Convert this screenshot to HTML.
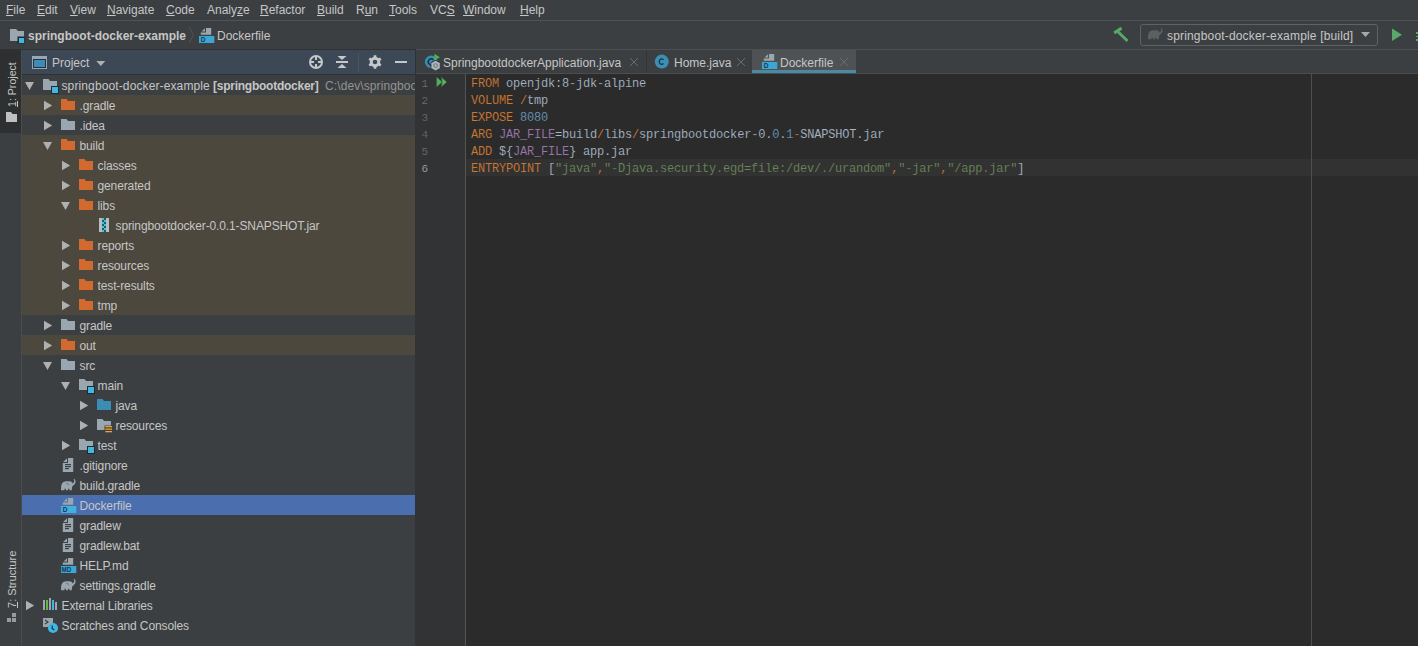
<!DOCTYPE html>
<html><head><meta charset="utf-8">
<style>
*{box-sizing:border-box;margin:0;padding:0}
html,body{width:1418px;height:646px;overflow:hidden;background:#3c3f41;font-family:"Liberation Sans",sans-serif;font-size:12px;color:#c6c6c6}
.a{position:absolute}
.t{position:absolute;white-space:pre;line-height:20px;height:20px}
.ic{position:absolute;overflow:visible}
u{text-decoration:underline;text-underline-offset:1px}
.row{position:absolute;left:22px;width:393px;height:20px}
.ex{background:#4c483e}
.sel{background:#4b6eaf}
.tr{letter-spacing:-0.12px}
.tr b{font-weight:bold}
.vt{white-space:pre;font-size:10.6px;line-height:14px;height:14px;transform:rotate(-90deg);transform-origin:0 0}
.code{position:absolute;left:471px;font-family:"Liberation Mono",monospace;font-size:12px;letter-spacing:-0.2px;line-height:17px;height:17px;white-space:pre;color:#a9b7c6;-webkit-text-stroke:0.1px #2b2b2b}
.ln{position:absolute;left:416px;width:12px;text-align:right;font-family:"Liberation Mono",monospace;font-size:11px;line-height:17px;color:#6a6d70;-webkit-text-stroke:0.1px #313335}
.k{color:#cc7832}.s{color:#6a8759}.n{color:#6897bb}.v{color:#9876aa}
</style></head><body>
<!-- menu -->
<div class="a" style="left:0;top:0;width:1418px;height:20px;background:#3c3f41">
<span class="t" style="left:6px;top:0"><u>F</u>ile</span>
<span class="t" style="left:37px;top:0"><u>E</u>dit</span>
<span class="t" style="left:70px;top:0"><u>V</u>iew</span>
<span class="t" style="left:107px;top:0"><u>N</u>avigate</span>
<span class="t" style="left:166px;top:0"><u>C</u>ode</span>
<span class="t" style="left:207px;top:0">Analy<u>z</u>e</span>
<span class="t" style="left:260px;top:0"><u>R</u>efactor</span>
<span class="t" style="left:317px;top:0"><u>B</u>uild</span>
<span class="t" style="left:356px;top:0">R<u>u</u>n</span>
<span class="t" style="left:389px;top:0"><u>T</u>ools</span>
<span class="t" style="left:430px;top:0">VC<u>S</u></span>
<span class="t" style="left:463px;top:0"><u>W</u>indow</span>
<span class="t" style="left:520px;top:0"><u>H</u>elp</span>
</div>
<div class="a" style="left:0;top:20px;width:1418px;height:1px;background:#505355"></div>
<!-- nav bar -->
<div class="a" style="left:0;top:49px;width:416px;height:1px;background:#2f3133"></div><div class="a" style="left:416px;top:49px;width:1002px;height:1px;background:#4d5052"></div>
<svg class="ic" style="left:9px;top:27px" width="16" height="16" viewBox="0 0 16 16"><path d="M1 2h6l2 2h6v6h-6v4h-8z" fill="#9aa7b0"/><rect x="8.5" y="9.5" width="7" height="7" fill="#1f2a30"/><rect x="10" y="11" width="5" height="5" fill="#40b6e0"/></svg>
<span class="t" style="left:28px;top:26px;font-weight:bold">springboot-docker-example</span>
<svg class="ic" style="left:188px;top:27px" width="8" height="18" viewBox="0 0 8 18"><path d="M1 0L5.5 8L1 16" stroke="#505355" fill="none" stroke-width="1"/></svg>
<svg class="ic" style="left:198px;top:27px" width="17" height="17" viewBox="0 0 17 17"><path d="M8 1H13.2V7.8H2.8V5.6H8Z" fill="#9aa7b0"/><path d="M7 1.2V4.6H3.6Z" fill="#9aa7b0"/><rect x="1" y="9" width="15.3" height="7" fill="#3ea6d3"/><text x="2.8" y="15" font-family="Liberation Sans" font-weight="bold" font-size="6.6" fill="#0d3a5c">D</text></svg>
<span class="t" style="left:217px;top:26px">Dockerfile</span>
<!-- toolbar right -->
<svg class="ic" style="left:1106px;top:22px" width="26" height="24" viewBox="0 0 26 24"><path d="M8.2 11L15.5 6.2" stroke="#59a869" stroke-width="3.2"/><path d="M12 9.8L21.5 19" stroke="#59a869" stroke-width="2.9"/></svg>
<div class="a" style="left:1140px;top:24px;width:238px;height:22px;border:1px solid #5f6263;border-radius:3px;background:#3c3f41"></div>
<svg class="ic" style="left:1147px;top:26px" width="17" height="15" viewBox="0 0 17 15"><path d="M1 13.2L1.1 10C1.2 7 2.6 4.8 5 4.4C7 4.1 9 4.2 10.6 4.6C11.6 4.9 12.3 5.6 12.6 6.4C13.7 5.8 14.6 4.5 14.1 2.8L13.5 2.4L14.1 1.7C15.7 2.6 16.1 4.9 14.9 6.8C14.1 8 13 8.8 12.2 9.6L11.7 13.2H9.4V11.7H8.1V13.2H5.9V11.7H4.5V13.2Z" fill="#5c6063"/></svg>
<span class="t" style="left:1167px;top:26px;letter-spacing:0.17px">springboot-docker-example [build]</span>
<svg class="ic" style="left:1361px;top:32px" width="10" height="6" viewBox="0 0 10 6"><path d="M0 0H9L4.5 5z" fill="#a8a8a8"/></svg>
<svg class="ic" style="left:1392px;top:28px" width="11" height="14" viewBox="0 0 11 14"><path d="M0 0.6L10 6.75L0 13Z" fill="#59a869"/></svg>
<div class="a" style="left:1416px;top:32px;width:2px;height:1.6px;background:#59a869"></div><div class="a" style="left:1416px;top:35.5px;width:2px;height:1.6px;background:#59a869"></div><div class="a" style="left:1416px;top:39px;width:2px;height:1.6px;background:#59a869"></div>
<!-- left strip -->
<div class="a" style="left:0;top:50px;width:21px;height:83px;background:#2d2f30"></div>
<div class="a" style="left:21px;top:50px;width:1px;height:596px;background:#4a4d4f"></div>
<span class="a vt" style="left:5px;top:107px"><u>1</u>: Project</span>
<svg class="ic" style="left:6px;top:112px" width="12" height="10" viewBox="0 0 12 10"><path d="M0 0h5l1.5 2h4.5v8h-11z" fill="#c0c0c0"/></svg>
<span class="a vt" style="left:5px;top:608px;font-size:11.1px"><u>7</u>: Structure</span>
<svg class="ic" style="left:7px;top:613px" width="10" height="10" viewBox="0 0 10 10"><rect x="5" y="0" width="4" height="4" fill="#9a9a9a"/><rect x="0" y="5" width="4" height="4" fill="#9a9a9a"/><rect x="5" y="5" width="4" height="4" fill="#9a9a9a"/></svg>
<!-- project panel header -->
<div class="a" style="left:22px;top:50px;width:393px;height:24px;background:#3d4856"></div>
<div class="a" style="left:22px;top:74px;width:393px;height:1px;background:#2f3133"></div>
<svg class="ic" style="left:32px;top:56px" width="15" height="14" viewBox="0 0 15 14"><rect x="0" y="0" width="15" height="13" fill="#9aa7b0"/><rect x="1" y="3" width="13" height="9" fill="#24313a"/><rect x="2" y="4" width="11" height="7" fill="#3b8cb8"/></svg>
<span class="t" style="left:52px;top:53px">Project</span>
<svg class="ic" style="left:96px;top:61px" width="10" height="6" viewBox="0 0 10 6"><path d="M0.3 0H9.3L4.8 5z" fill="#b0b0b0"/></svg>
<svg class="ic" style="left:308px;top:54px" width="16" height="16" viewBox="0 0 16 16"><circle cx="8" cy="8" r="6" stroke="#c5c8ca" stroke-width="2" fill="none"/><rect x="7" y="2" width="2" height="4" fill="#c5c8ca"/><rect x="7" y="10" width="2" height="4" fill="#c5c8ca"/><rect x="2" y="7" width="4" height="2" fill="#c5c8ca"/><rect x="10" y="7" width="4" height="2" fill="#c5c8ca"/></svg>
<svg class="ic" style="left:336px;top:56px" width="12" height="12" viewBox="0 0 12 12"><path d="M1.5 0H10.5L6 4z" fill="#c5c8ca"/><rect x="0" y="5" width="12" height="2" fill="#c5c8ca"/><path d="M1.5 12H10.5L6 8z" fill="#c5c8ca"/></svg>
<div class="a" style="left:358px;top:53px;width:1px;height:19px;background:#4a5561"></div>
<svg class="ic" style="left:368px;top:55px" width="14" height="14" viewBox="0 0 14 14"><path d="M4.40 2.50 L5.57 2.00 L5.70 0.32 L8.30 0.32 L8.43 2.00 L9.60 2.50 L10.61 3.26 L12.13 2.54 L13.43 4.79 L12.05 5.74 L12.20 7.00 L12.05 8.26 L13.43 9.21 L12.13 11.46 L10.61 10.74 L9.60 11.50 L8.43 12.00 L8.30 13.68 L5.70 13.68 L5.57 12.00 L4.40 11.50 L3.39 10.74 L1.87 11.46 L0.57 9.21 L1.95 8.26 L1.80 7.00 L1.95 5.74 L0.57 4.79 L1.87 2.54 L3.39 3.26Z" fill="#c5c8ca"/><circle cx="7" cy="7" r="2.3" fill="#3d4856"/></svg>
<div class="a" style="left:395px;top:61px;width:12px;height:2px;background:#c5c8ca"></div>
<div class="a" style="left:415px;top:50px;width:1px;height:24px;background:#2f3133"></div>
<!-- tree -->
<svg class="ic" style="left:25px;top:75px" width="10" height="20" viewBox="0 0 10 20"><path d="M0 7H9L4.5 15Z" fill="#aeb0b1"/></svg>
<svg class="ic" style="left:42px;top:77px" width="17" height="17" viewBox="0 0 17 17"><path d="M1 2H6.5L8 4H15V9H9V13H1Z" fill="#9aa7b0"/><rect x="9" y="9" width="8" height="8" fill="#1f2b33"/><rect x="10" y="10" width="6" height="6" fill="#40b6e0"/></svg>
<span class="t tr" style="left:61.5px;top:76px;letter-spacing:0.12px">springboot-docker-example</span><span class="t tr" style="left:213px;top:76px;font-weight:bold;letter-spacing:-0.25px">[springbootdocker]</span><span class="t tr" style="left:325px;top:76px;color:#939393;letter-spacing:0.1px">C:\dev\springboot-docker-example</span>
<div class="row ex" style="top:95px"></div>
<svg class="ic" style="left:44px;top:95px" width="10" height="20" viewBox="0 0 10 20"><path d="M0 5.7L8.2 10.45L0 15.2Z" fill="#aeb0b1"/></svg>
<svg class="ic" style="left:60px;top:97px" width="17" height="17" viewBox="0 0 17 17"><path d="M1 2H6.5L8 4H15V13H1Z" fill="#d2692e"/></svg>
<span class="t tr" style="left:79.5px;top:96px">.gradle</span>
<svg class="ic" style="left:44px;top:115px" width="10" height="20" viewBox="0 0 10 20"><path d="M0 5.7L8.2 10.45L0 15.2Z" fill="#aeb0b1"/></svg>
<svg class="ic" style="left:60px;top:117px" width="17" height="17" viewBox="0 0 17 17"><path d="M1 2H6.5L8 4H15V13H1Z" fill="#9aa7b0"/></svg>
<span class="t tr" style="left:79.5px;top:116px">.idea</span>
<div class="row ex" style="top:135px"></div>
<svg class="ic" style="left:43px;top:135px" width="10" height="20" viewBox="0 0 10 20"><path d="M0 7H9L4.5 15Z" fill="#aeb0b1"/></svg>
<svg class="ic" style="left:60px;top:137px" width="17" height="17" viewBox="0 0 17 17"><path d="M1 2H6.5L8 4H15V13H1Z" fill="#d2692e"/></svg>
<span class="t tr" style="left:79.5px;top:136px">build</span>
<div class="row ex" style="top:155px"></div>
<svg class="ic" style="left:62px;top:155px" width="10" height="20" viewBox="0 0 10 20"><path d="M0 5.7L8.2 10.45L0 15.2Z" fill="#aeb0b1"/></svg>
<svg class="ic" style="left:78px;top:157px" width="17" height="17" viewBox="0 0 17 17"><path d="M1 2H6.5L8 4H15V13H1Z" fill="#d2692e"/></svg>
<span class="t tr" style="left:97.5px;top:156px">classes</span>
<div class="row ex" style="top:175px"></div>
<svg class="ic" style="left:62px;top:175px" width="10" height="20" viewBox="0 0 10 20"><path d="M0 5.7L8.2 10.45L0 15.2Z" fill="#aeb0b1"/></svg>
<svg class="ic" style="left:78px;top:177px" width="17" height="17" viewBox="0 0 17 17"><path d="M1 2H6.5L8 4H15V13H1Z" fill="#d2692e"/></svg>
<span class="t tr" style="left:97.5px;top:176px">generated</span>
<div class="row ex" style="top:195px"></div>
<svg class="ic" style="left:61px;top:195px" width="10" height="20" viewBox="0 0 10 20"><path d="M0 7H9L4.5 15Z" fill="#aeb0b1"/></svg>
<svg class="ic" style="left:78px;top:197px" width="17" height="17" viewBox="0 0 17 17"><path d="M1 2H6.5L8 4H15V13H1Z" fill="#d2692e"/></svg>
<span class="t tr" style="left:97.5px;top:196px">libs</span>
<div class="row ex" style="top:215px"></div>
<svg class="ic" style="left:96px;top:217px" width="17" height="17" viewBox="0 0 17 17"><rect x="3" y="1" width="10" height="14" fill="#b4bec4"/><rect x="6" y="1" width="4" height="14" fill="#17606e"/><rect x="6" y="1" width="2" height="2" fill="#5ab8c8"/><rect x="8" y="3" width="2" height="2" fill="#5ab8c8"/><rect x="6" y="5" width="2" height="2" fill="#5ab8c8"/><rect x="8" y="7" width="2" height="2" fill="#5ab8c8"/><rect x="6" y="9" width="2" height="2" fill="#5ab8c8"/><rect x="8" y="11" width="2" height="2" fill="#5ab8c8"/><rect x="6" y="13" width="2" height="2" fill="#5ab8c8"/></svg>
<span class="t tr" style="left:115.5px;top:216px">springbootdocker-0.0.1-SNAPSHOT.jar</span>
<div class="row ex" style="top:235px"></div>
<svg class="ic" style="left:62px;top:235px" width="10" height="20" viewBox="0 0 10 20"><path d="M0 5.7L8.2 10.45L0 15.2Z" fill="#aeb0b1"/></svg>
<svg class="ic" style="left:78px;top:237px" width="17" height="17" viewBox="0 0 17 17"><path d="M1 2H6.5L8 4H15V13H1Z" fill="#d2692e"/></svg>
<span class="t tr" style="left:97.5px;top:236px">reports</span>
<div class="row ex" style="top:255px"></div>
<svg class="ic" style="left:62px;top:255px" width="10" height="20" viewBox="0 0 10 20"><path d="M0 5.7L8.2 10.45L0 15.2Z" fill="#aeb0b1"/></svg>
<svg class="ic" style="left:78px;top:257px" width="17" height="17" viewBox="0 0 17 17"><path d="M1 2H6.5L8 4H15V13H1Z" fill="#d2692e"/></svg>
<span class="t tr" style="left:97.5px;top:256px">resources</span>
<div class="row ex" style="top:275px"></div>
<svg class="ic" style="left:62px;top:275px" width="10" height="20" viewBox="0 0 10 20"><path d="M0 5.7L8.2 10.45L0 15.2Z" fill="#aeb0b1"/></svg>
<svg class="ic" style="left:78px;top:277px" width="17" height="17" viewBox="0 0 17 17"><path d="M1 2H6.5L8 4H15V13H1Z" fill="#d2692e"/></svg>
<span class="t tr" style="left:97.5px;top:276px">test-results</span>
<div class="row ex" style="top:295px"></div>
<svg class="ic" style="left:62px;top:295px" width="10" height="20" viewBox="0 0 10 20"><path d="M0 5.7L8.2 10.45L0 15.2Z" fill="#aeb0b1"/></svg>
<svg class="ic" style="left:78px;top:297px" width="17" height="17" viewBox="0 0 17 17"><path d="M1 2H6.5L8 4H15V13H1Z" fill="#d2692e"/></svg>
<span class="t tr" style="left:97.5px;top:296px">tmp</span>
<svg class="ic" style="left:44px;top:315px" width="10" height="20" viewBox="0 0 10 20"><path d="M0 5.7L8.2 10.45L0 15.2Z" fill="#aeb0b1"/></svg>
<svg class="ic" style="left:60px;top:317px" width="17" height="17" viewBox="0 0 17 17"><path d="M1 2H6.5L8 4H15V13H1Z" fill="#9aa7b0"/></svg>
<span class="t tr" style="left:79.5px;top:316px">gradle</span>
<div class="row ex" style="top:335px"></div>
<svg class="ic" style="left:44px;top:335px" width="10" height="20" viewBox="0 0 10 20"><path d="M0 5.7L8.2 10.45L0 15.2Z" fill="#aeb0b1"/></svg>
<svg class="ic" style="left:60px;top:337px" width="17" height="17" viewBox="0 0 17 17"><path d="M1 2H6.5L8 4H15V13H1Z" fill="#d2692e"/></svg>
<span class="t tr" style="left:79.5px;top:336px">out</span>
<svg class="ic" style="left:43px;top:355px" width="10" height="20" viewBox="0 0 10 20"><path d="M0 7H9L4.5 15Z" fill="#aeb0b1"/></svg>
<svg class="ic" style="left:60px;top:357px" width="17" height="17" viewBox="0 0 17 17"><path d="M1 2H6.5L8 4H15V13H1Z" fill="#9aa7b0"/></svg>
<span class="t tr" style="left:79.5px;top:356px">src</span>
<svg class="ic" style="left:61px;top:375px" width="10" height="20" viewBox="0 0 10 20"><path d="M0 7H9L4.5 15Z" fill="#aeb0b1"/></svg>
<svg class="ic" style="left:78px;top:377px" width="17" height="17" viewBox="0 0 17 17"><path d="M1 2H6.5L8 4H15V9H9V13H1Z" fill="#9aa7b0"/><rect x="9" y="9" width="8" height="8" fill="#1f2b33"/><rect x="10" y="10" width="6" height="6" fill="#40b6e0"/></svg>
<span class="t tr" style="left:97.5px;top:376px">main</span>
<svg class="ic" style="left:80px;top:395px" width="10" height="20" viewBox="0 0 10 20"><path d="M0 5.7L8.2 10.45L0 15.2Z" fill="#aeb0b1"/></svg>
<svg class="ic" style="left:96px;top:397px" width="17" height="17" viewBox="0 0 17 17"><path d="M1 2H6.5L8 4H15V13H1Z" fill="#3b8db5"/></svg>
<span class="t tr" style="left:115.5px;top:396px">java</span>
<svg class="ic" style="left:80px;top:415px" width="10" height="20" viewBox="0 0 10 20"><path d="M0 5.7L8.2 10.45L0 15.2Z" fill="#aeb0b1"/></svg>
<svg class="ic" style="left:96px;top:417px" width="17" height="17" viewBox="0 0 17 17"><path d="M1 2H6.5L8 4H15V8.5H8.5V13H1Z" fill="#9aa7b0"/><rect x="9.3" y="9" width="6.7" height="1.3" fill="#e8a33b"/><rect x="9.3" y="11.5" width="6.7" height="1.3" fill="#e8a33b"/><rect x="9.3" y="14" width="6.7" height="1.3" fill="#e8a33b"/></svg>
<span class="t tr" style="left:115.5px;top:416px">resources</span>
<svg class="ic" style="left:62px;top:435px" width="10" height="20" viewBox="0 0 10 20"><path d="M0 5.7L8.2 10.45L0 15.2Z" fill="#aeb0b1"/></svg>
<svg class="ic" style="left:78px;top:437px" width="17" height="17" viewBox="0 0 17 17"><path d="M1 2H6.5L8 4H15V9H9V13H1Z" fill="#9aa7b0"/><rect x="9" y="9" width="8" height="8" fill="#1f2b33"/><rect x="10" y="10" width="6" height="6" fill="#40b6e0"/></svg>
<span class="t tr" style="left:97.5px;top:436px">test</span>
<svg class="ic" style="left:60px;top:457px" width="17" height="17" viewBox="0 0 17 17"><path d="M8 1H13.2V15H2.8V6H8Z" fill="#9aa7b0"/><path d="M7 1.2V5H3.2Z" fill="#9aa7b0"/><rect x="5" y="7" width="6" height="1.2" fill="#3c3f41"/><rect x="5" y="9" width="6" height="1.2" fill="#3c3f41"/><rect x="5" y="11" width="4" height="1.2" fill="#3c3f41"/></svg>
<span class="t tr" style="left:79.5px;top:456px">.gitignore</span>
<svg class="ic" style="left:60px;top:477px" width="17" height="17" viewBox="0 0 17 17"><path d="M1 13.2L1.1 10C1.2 7 2.6 4.8 5 4.4C7 4.1 9 4.2 10.6 4.6C11.6 4.9 12.3 5.6 12.6 6.4C13.7 5.8 14.6 4.5 14.1 2.8L13.5 2.4L14.1 1.7C15.7 2.6 16.1 4.9 14.9 6.8C14.1 8 13 8.8 12.2 9.6L11.7 13.2H9.4V11.7H8.1V13.2H5.9V11.7H4.5V13.2Z" fill="#9aa7b0"/><path d="M6.3 6.2C7.6 6.2 8.4 6.9 8.6 8.2" stroke="#5b6368" stroke-width="0.9" fill="none"/></svg>
<span class="t tr" style="left:79.5px;top:476px">build.gradle</span>
<div class="row sel" style="top:495px"></div>
<svg class="ic" style="left:60px;top:497px" width="17" height="17" viewBox="0 0 17 17"><path d="M8 1H13.2V7.8H2.8V5.6H8Z" fill="#9aa7b0"/><path d="M7 1.2V4.6H3.6Z" fill="#9aa7b0"/><rect x="1" y="9" width="15.3" height="7" fill="#46b0dc"/><text x="2.8" y="15" font-family="Liberation Sans" font-weight="bold" font-size="6.6" fill="#0d3a5c">D</text></svg>
<span class="t tr" style="left:79.5px;top:496px">Dockerfile</span>
<svg class="ic" style="left:60px;top:517px" width="17" height="17" viewBox="0 0 17 17"><path d="M8 1H13.2V15H2.8V6H8Z" fill="#9aa7b0"/><path d="M7 1.2V5H3.2Z" fill="#9aa7b0"/><rect x="5" y="7" width="6" height="1.2" fill="#3c3f41"/><rect x="5" y="9" width="6" height="1.2" fill="#3c3f41"/><rect x="5" y="11" width="4" height="1.2" fill="#3c3f41"/></svg>
<span class="t tr" style="left:79.5px;top:516px">gradlew</span>
<svg class="ic" style="left:60px;top:537px" width="17" height="17" viewBox="0 0 17 17"><path d="M8 1H13.2V15H2.8V6H8Z" fill="#9aa7b0"/><path d="M7 1.2V5H3.2Z" fill="#9aa7b0"/><rect x="5" y="7" width="6" height="1.2" fill="#3c3f41"/><rect x="5" y="9" width="6" height="1.2" fill="#3c3f41"/><rect x="5" y="11" width="4" height="1.2" fill="#3c3f41"/></svg>
<span class="t tr" style="left:79.5px;top:536px">gradlew.bat</span>
<svg class="ic" style="left:60px;top:557px" width="17" height="17" viewBox="0 0 17 17"><path d="M8 1H13.2V7.8H2.8V5.6H8Z" fill="#9aa7b0"/><path d="M7 1.2V4.6H3.6Z" fill="#9aa7b0"/><rect x="1" y="9" width="15.3" height="7" fill="#3ea6d3"/><text x="1.6" y="15" font-family="Liberation Sans" font-weight="bold" font-size="6.3" fill="#0d3a5c">MD</text></svg>
<span class="t tr" style="left:79.5px;top:556px">HELP.md</span>
<svg class="ic" style="left:60px;top:577px" width="17" height="17" viewBox="0 0 17 17"><path d="M1 13.2L1.1 10C1.2 7 2.6 4.8 5 4.4C7 4.1 9 4.2 10.6 4.6C11.6 4.9 12.3 5.6 12.6 6.4C13.7 5.8 14.6 4.5 14.1 2.8L13.5 2.4L14.1 1.7C15.7 2.6 16.1 4.9 14.9 6.8C14.1 8 13 8.8 12.2 9.6L11.7 13.2H9.4V11.7H8.1V13.2H5.9V11.7H4.5V13.2Z" fill="#9aa7b0"/><path d="M6.3 6.2C7.6 6.2 8.4 6.9 8.6 8.2" stroke="#5b6368" stroke-width="0.9" fill="none"/></svg>
<span class="t tr" style="left:79.5px;top:576px">settings.gradle</span>
<svg class="ic" style="left:26px;top:595px" width="10" height="20" viewBox="0 0 10 20"><path d="M0 5.7L8.2 10.45L0 15.2Z" fill="#aeb0b1"/></svg>
<svg class="ic" style="left:42px;top:597px" width="17" height="17" viewBox="0 0 17 17"><rect x="1" y="3" width="2" height="10" fill="#9aa7b0"/><rect x="4" y="3" width="2" height="10" fill="#62b543"/><rect x="7" y="1" width="2" height="12" fill="#9aa7b0"/><rect x="10" y="3" width="2" height="10" fill="#40b6e0"/><rect x="13" y="5" width="2" height="8" fill="#9aa7b0"/></svg>
<span class="t tr" style="left:61.5px;top:596px">External Libraries</span>
<svg class="ic" style="left:42px;top:617px" width="17" height="17" viewBox="0 0 17 17"><rect x="1" y="1" width="10" height="9" fill="#9aa7b0"/><path d="M3 3L6 5L3 7" stroke="#3c3f41" fill="none" stroke-width="1.2"/><circle cx="11" cy="11" r="5.1" fill="#40b6e0"/><path d="M10.2 8.5V11.5L12.2 13" stroke="#10324a" fill="none" stroke-width="1.2"/></svg>
<span class="t tr" style="left:61.5px;top:616px">Scratches and Consoles</span>
<!-- tabs -->
<div class="a" style="left:416px;top:50px;width:1002px;height:24px;background:#3c3f41"></div>
<div class="a" style="left:416px;top:73px;width:1002px;height:1px;background:#4a4c4e"></div>
<div class="a" style="left:646px;top:50px;width:1px;height:23px;background:#333537"></div>
<div class="a" style="left:752px;top:50px;width:104px;height:23px;background:#4e5254"></div>
<div class="a" style="left:752px;top:70px;width:104px;height:3px;background:#4a8aa5"></div>
<svg class="ic" style="left:420px;top:50px" width="24" height="24" viewBox="0 0 24 24"><circle cx="11.2" cy="11.9" r="6.3" fill="#3a8cb0"/><path d="M13.3 9.7A3 3 0 1 0 13.3 14.1" stroke="#10324a" stroke-width="1.4" fill="none"/><path d="M14.3 3.7L20 7.2L14.3 10.3Z" fill="#4fb04f"/><g transform="translate(15.6,15.6)"><circle r="5.6" fill="#3c3f41"/><path d="M-2.05 -3.55 L-1.27 -3.90 L-1.00 -4.70 L1.00 -4.70 L1.27 -3.90 L2.05 -3.55 L2.74 -3.05 L3.57 -3.21 L4.57 -1.48 L4.01 -0.85 L4.10 0.00 L4.01 0.85 L4.57 1.48 L3.57 3.21 L2.74 3.05 L2.05 3.55 L1.27 3.90 L1.00 4.70 L-1.00 4.70 L-1.27 3.90 L-2.05 3.55 L-2.74 3.05 L-3.57 3.21 L-4.57 1.48 L-4.01 0.85 L-4.10 -0.00 L-4.01 -0.85 L-4.57 -1.48 L-3.57 -3.21 L-2.74 -3.05Z" fill="#aeb9c0"/><circle r="2.4" fill="#6d787e"/><circle r="1.3" fill="#aeb9c0"/></g></svg>
<span class="t" style="left:443px;top:53px">SpringbootdockerApplication.java</span>
<svg class="ic" style="left:630px;top:58px" width="8" height="8" viewBox="0 0 8 8"><path d="M0 0L8 8M8 0L0 8" stroke="#6a6d6f" stroke-width="0.95"/></svg>
<svg class="ic" style="left:650px;top:50px" width="24" height="24" viewBox="0 0 24 24"><circle cx="11.8" cy="11.6" r="7" fill="#3d8fb1"/><path d="M13.4 9.9A2.3 2.7 0 1 0 13.4 13.3" stroke="#10324a" stroke-width="1.2" fill="none"/></svg>
<span class="t" style="left:674px;top:53px">Home.java</span>
<svg class="ic" style="left:737px;top:58px" width="8" height="8" viewBox="0 0 8 8"><path d="M0 0L8 8M8 0L0 8" stroke="#6a6d6f" stroke-width="0.95"/></svg>
<svg class="ic" style="left:761px;top:53px" width="17" height="17" viewBox="0 0 17 17"><path d="M8 1H13.2V7.8H2.8V5.6H8Z" fill="#9aa7b0"/><path d="M7 1.2V4.6H3.6Z" fill="#9aa7b0"/><rect x="1" y="9" width="15.3" height="7" fill="#3ea6d3"/><text x="2.8" y="15" font-family="Liberation Sans" font-weight="bold" font-size="6.6" fill="#0d3a5c">D</text></svg>
<span class="t" style="left:780px;top:53px">Dockerfile</span>
<svg class="ic" style="left:840px;top:58px" width="8" height="8" viewBox="0 0 8 8"><path d="M0 0L8 8M8 0L0 8" stroke="#6a6d6f" stroke-width="0.95"/></svg>
<!-- editor -->
<div class="a" style="left:415px;top:74px;width:1003px;height:572px;background:#2b2b2b"></div>
<div class="a" style="left:415px;top:74px;width:50px;height:572px;background:#313335"></div>
<div class="a" style="left:465px;top:74px;width:1px;height:572px;background:#555555"></div>
<div class="a" style="left:466px;top:159px;width:952px;height:17px;background:#323232"></div>
<div class="a" style="left:1311px;top:74px;width:1px;height:572px;background:#4e4e4e"></div>
<svg class="ic" style="left:436px;top:76px" width="12" height="12" viewBox="0 0 12 12"><path d="M0.6 1L6.2 6L0.6 11Z" fill="#4fae5a"/><path d="M5.2 1L10.8 6L5.2 11L6.2 6Z" fill="#5cb867" stroke="#2d5a33" stroke-width="0.6"/></svg>
<div class="ln" style="top:76px;">1</div>
<div class="ln" style="top:93px;">2</div>
<div class="ln" style="top:110px;">3</div>
<div class="ln" style="top:127px;">4</div>
<div class="ln" style="top:144px;">5</div>
<div class="ln" style="top:161px;color:#a4a3a3">6</div>
<div class="code" style="top:76px"><span class="k">FROM</span> openjdk:8-jdk-alpine</div>
<div class="code" style="top:93px"><span class="k">VOLUME</span> <span class="k">/</span>tmp</div>
<div class="code" style="top:110px"><span class="k">EXPOSE</span> <span class="n">8080</span></div>
<div class="code" style="top:127px"><span class="k">ARG</span> <span class="v">JAR_FILE</span>=build<span class="k">/</span>libs<span class="k">/</span>springbootdocker-0.<span class="n">0</span>.<span class="n">1</span><span class="k">-</span>SNAPSHOT.jar</div>
<div class="code" style="top:144px"><span class="k">ADD</span> ${<span class="v">JAR_FILE</span>} app.jar</div>
<div class="code" style="top:161px;-webkit-text-stroke-color:#323232"><span class="k">ENTRYPOINT</span> [<span class="s">"java"</span><span class="k">,</span><span class="s">"-Djava.security.egd=file:/dev/./urandom"</span><span class="k">,</span><span class="s">"-jar"</span><span class="k">,</span><span class="s">"/app.jar"</span>]</div>
</body></html>
